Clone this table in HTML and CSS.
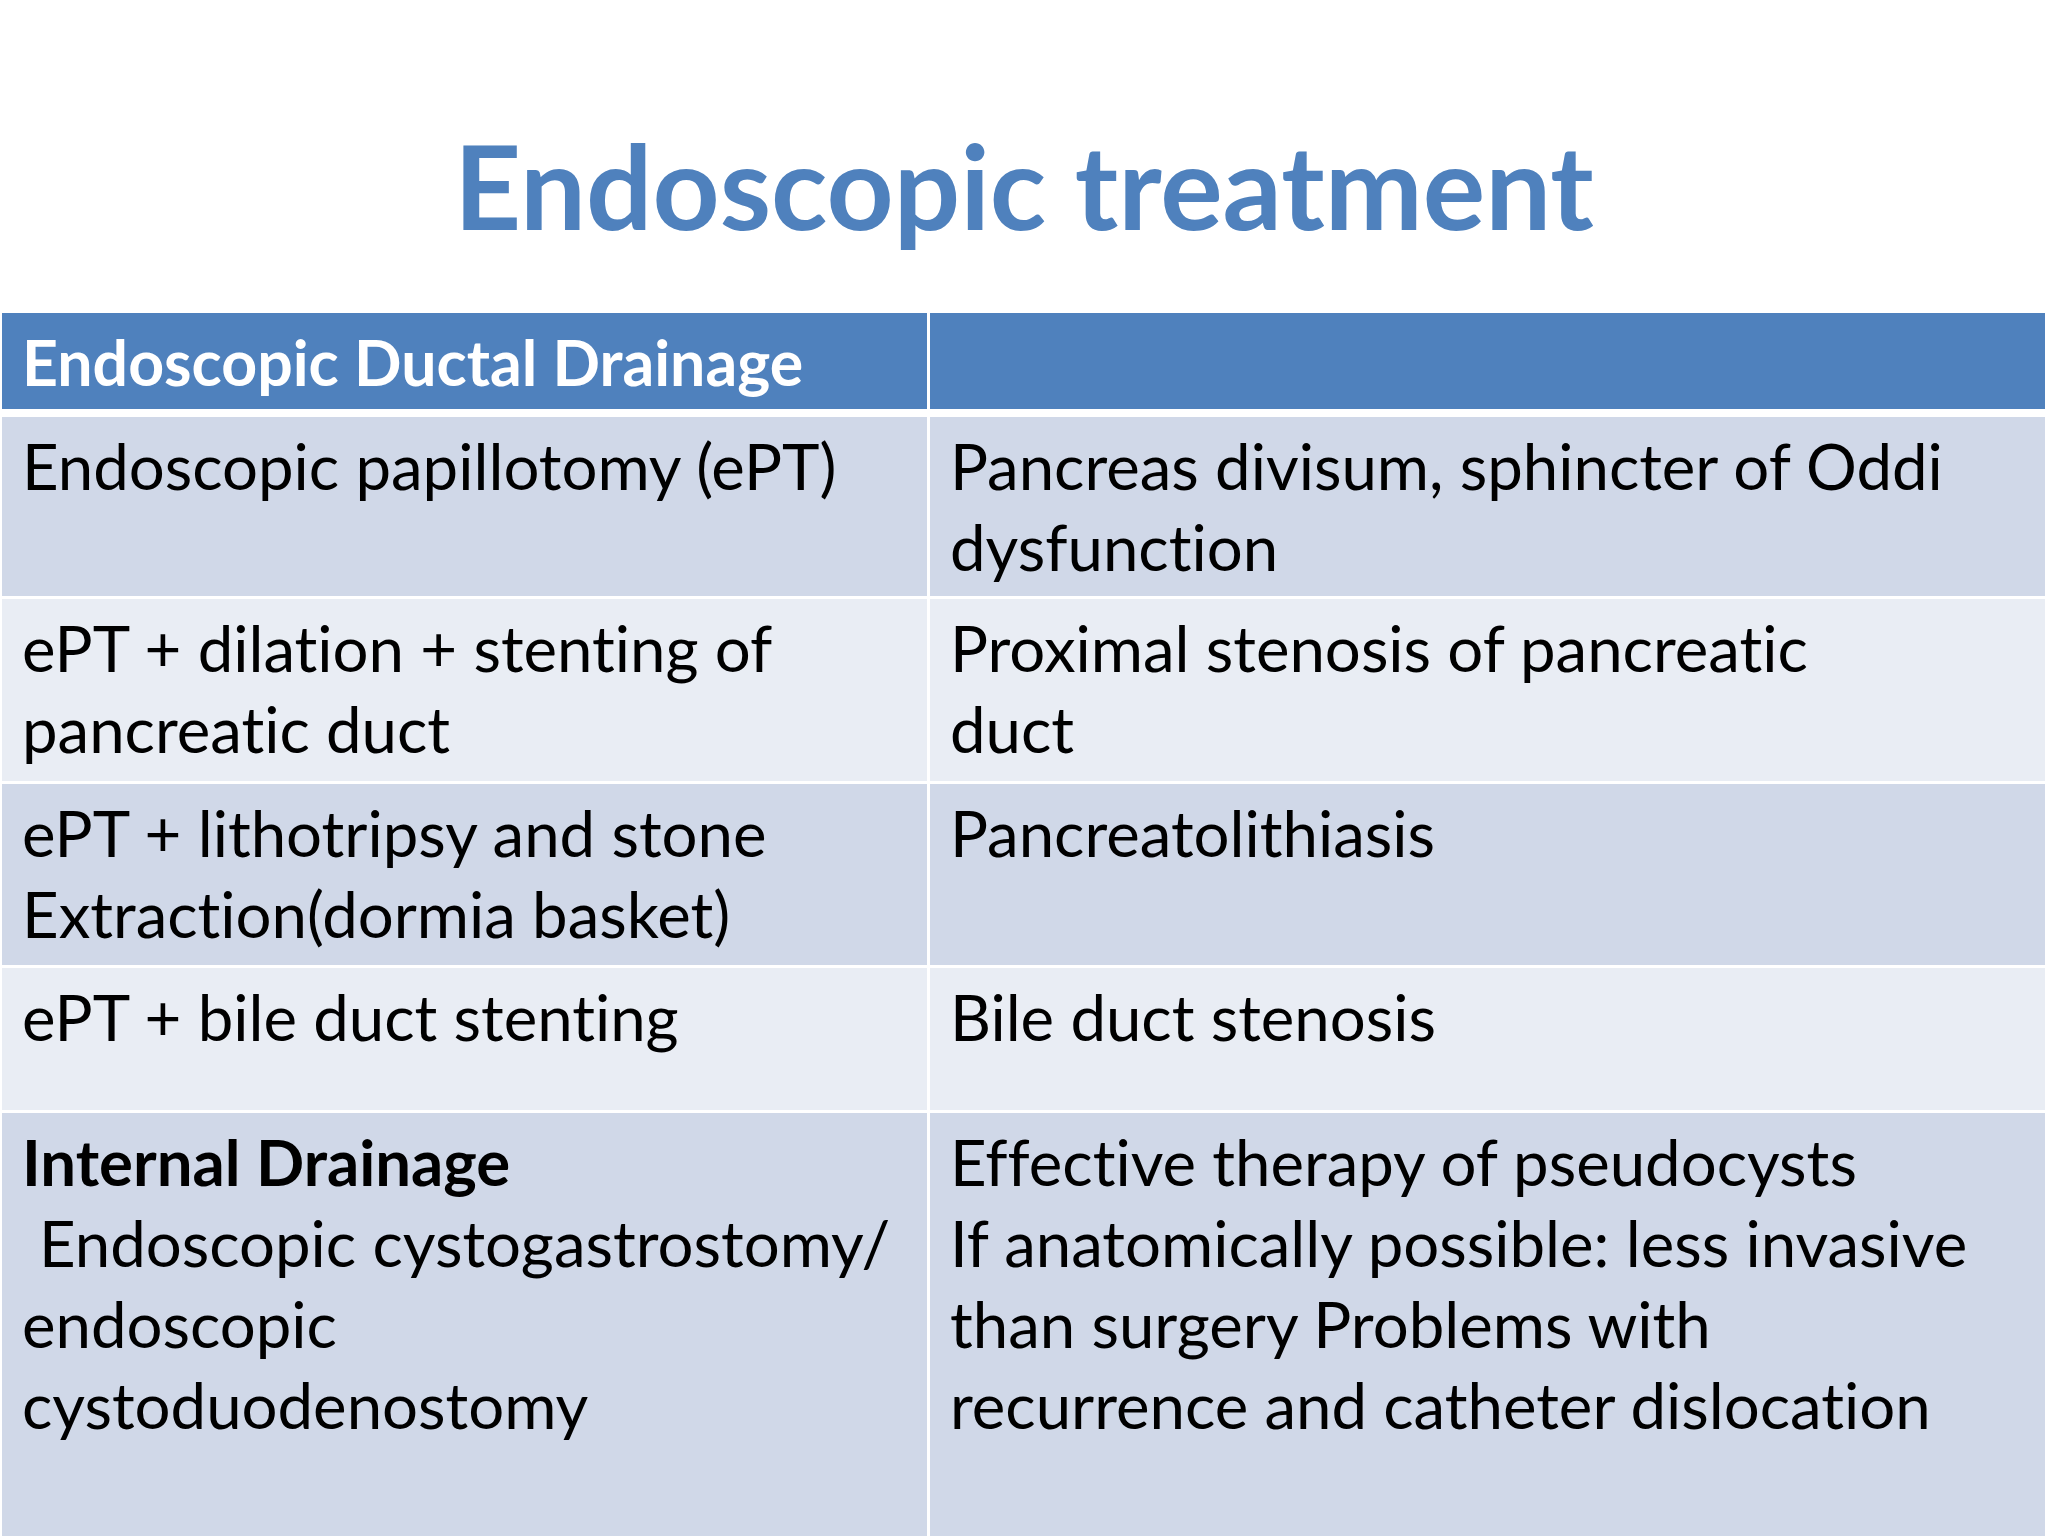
FILE: index.html
```html
<!DOCTYPE html>
<html lang="en">
<head>
<meta charset="utf-8">
<title>Endoscopic treatment</title>
<link rel="stylesheet" href="styles.css">
</head>
<body>
<div class="slide">
  <h1 class="title">Endoscopic treatment</h1>
  <div class="table">
    <div class="row head">
      <div class="cell">Endoscopic Ductal Drainage</div>
      <div class="cell"></div>
    </div>
    <div class="row odd r1">
      <div class="cell">Endoscopic papillotomy (ePT)</div>
      <div class="cell">Pancreas divisum, sphincter of Oddi<br>dysfunction</div>
    </div>
    <div class="row even r2">
      <div class="cell">ePT + dilation + stenting of<br>pancreatic duct</div>
      <div class="cell">Proximal stenosis of pancreatic<br>duct</div>
    </div>
    <div class="row odd r3">
      <div class="cell">ePT + lithotripsy and stone<br>Extraction(dormia basket)</div>
      <div class="cell">Pancreatolithiasis</div>
    </div>
    <div class="row even r4">
      <div class="cell">ePT + bile duct stenting</div>
      <div class="cell">Bile duct stenosis</div>
    </div>
    <div class="row odd r5">
      <div class="cell"><strong class="b">Internal Drainage</strong><br><span class="ind">Endoscopic cystogastrostomy/</span><br>endoscopic<br>cystoduodenostomy</div>
      <div class="cell">Effective therapy of pseudocysts<br>If anatomically possible: less invasive<br>than surgery Problems with<br>recurrence and catheter dislocation</div>
    </div>
  </div>
</div>
</body>
</html>
```

FILE: styles.css
```css
html, body {
  margin: 0;
  padding: 0;
  background: #ffffff;
}

.slide {
  width: 2048px;
  height: 1536px;
  overflow: hidden;
  background: #ffffff;
  font-family: Lato, "Liberation Sans", sans-serif;
  font-variant-ligatures: none;
}

.title {
  margin: 0;
  height: 313px;
  box-sizing: border-box;
  padding-top: 115px;
  text-align: center;
  font-family: Lato, "Liberation Sans", sans-serif;
  font-weight: 700;
  font-size: 117px;
  line-height: 140px;
  color: #4f81bd;
}

.table {
  display: flex;
  flex-direction: column;
  gap: 3px;
  padding: 0 3px 0 2px;
}

.row {
  display: grid;
  grid-template-columns: 925px 1fr;
  column-gap: 3px;
}

.cell {
  box-sizing: border-box;
  padding: 8px 20px 0 20px;
  font-size: 63.5px;
  line-height: 81px;
  color: #000000;
  white-space: nowrap;
}

.head {
  height: 96px;
  margin-bottom: 5px;
}

.head .cell {
  background: #4f81bd;
  color: #ffffff;
  font-weight: 700;
  font-size: 62.6px;
}

.odd .cell {
  background: #d0d8e8;
}

.even .cell {
  background: #e9edf4;
}

.r1 { height: 179px; }
.r2 { height: 182px; }
.r3 { height: 181px; }
.r4 { height: 142px; }
.r5 { height: 430px; }

.b {
  font-weight: 700;
}

.ind {
  padding-left: 17px;
}
```
